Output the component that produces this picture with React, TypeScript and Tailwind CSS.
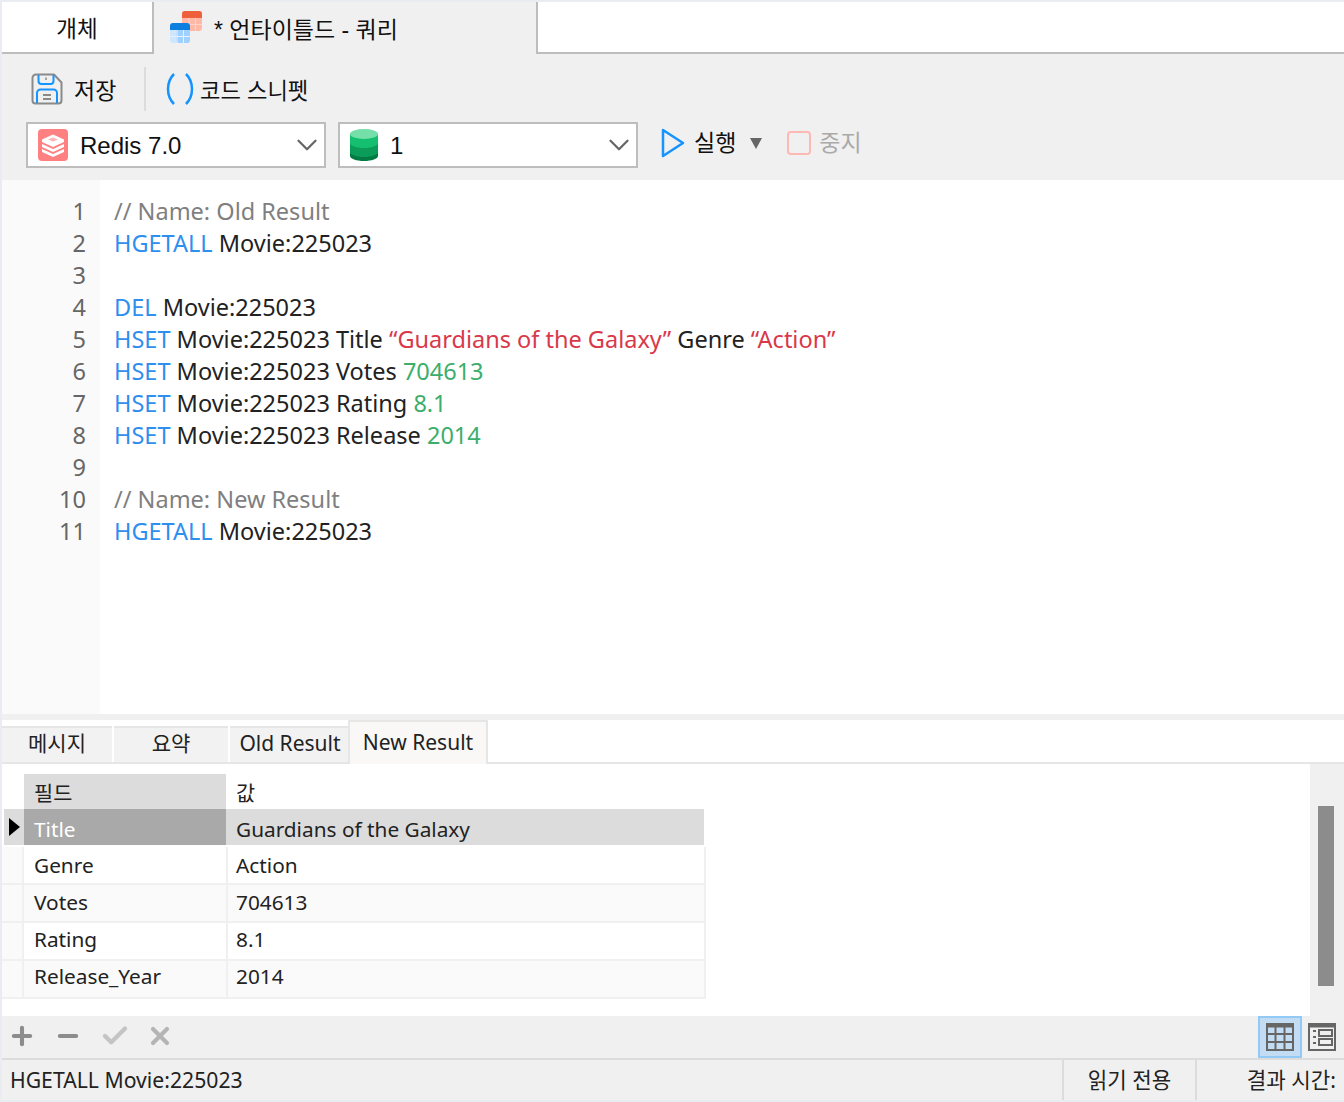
import { Check, ChevronDown, Minus, Plus, X } from "lucide-react";

const kr = "font-['Noto_Sans','Noto_Sans_CJK_KR',sans-serif]";
const ui = "font-['Liberation_Sans','Noto_Sans_CJK_KR',sans-serif]";

type Part = { t: string; c?: string };

const KEY = "text-[#2f8fee]";
const STR = "text-[#d8394a]";
const NUM = "text-[#3cae6b]";
const COM = "text-[#7f7f7f]";

const lines: Part[][] = [
	[{ t: "// Name: Old Result", c: COM }],
	[{ t: "HGETALL", c: KEY }, { t: " Movie:225023" }],
	[],
	[{ t: "DEL", c: KEY }, { t: " Movie:225023" }],
	[
		{ t: "HSET", c: KEY },
		{ t: " Movie:225023 Title " },
		{ t: "“Guardians of the Galaxy”", c: STR },
		{ t: " Genre " },
		{ t: "“Action”", c: STR },
	],
	[{ t: "HSET", c: KEY }, { t: " Movie:225023 Votes " }, { t: "704613", c: NUM }],
	[{ t: "HSET", c: KEY }, { t: " Movie:225023 Rating " }, { t: "8.1", c: NUM }],
	[{ t: "HSET", c: KEY }, { t: " Movie:225023 Release " }, { t: "2014", c: NUM }],
	[],
	[{ t: "// Name: New Result", c: COM }],
	[{ t: "HGETALL", c: KEY }, { t: " Movie:225023" }],
];

// text sits a little higher in each lower row of the reference
const rows = [
	{ name: "Genre", value: "Action", pad: "pt-[2px]" },
	{ name: "Votes", value: "704613", pad: "pb-0" },
	{ name: "Rating", value: "8.1", pad: "pb-[2px]" },
	{ name: "Release_Year", value: "2014", pad: "pb-[4px]" },
];

const QueryIcon = () => (
	<svg width="34" height="34" viewBox="0 0 34 34">
		<rect x="13" y="0" width="20" height="20" rx="3" fill="#ffb9a6" />
		<path d="M13 7V3a3 3 0 0 1 3-3h14a3 3 0 0 1 3 3v4z" fill="#ee5f3c" />
		<path d="M20 7v13M26.500 7v13M13 13.500h20" stroke="#ffd2c6" strokeWidth="1" />
		<rect x="1" y="12" width="20" height="20" rx="3" fill="#cfe6ff" />
		<rect x="7" y="18" width="14" height="14" rx="3" fill="#9fd0ff" />
		<path d="M1 19v-4a3 3 0 0 1 3-3h14a3 3 0 0 1 3 3v4z" fill="#0a7fe0" />
		<path d="M8 19v13M14.500 19v13M1 25.500h20" stroke="#e4f1ff" strokeWidth="1" />
	</svg>
);

const SaveIcon = () => (
	<svg width="32" height="32" viewBox="0 0 32 32" fill="none">
		<path d="M5 1.500h18l7.500 8v18a3 3 0 0 1-3 3H4.500a3 3 0 0 1-3-3V5a3.500 3.500 0 0 1 3.500-3.500z" stroke="#8a8a8a" strokeWidth="2" strokeLinejoin="round" />
		<path d="M7.500 2v6a3 3 0 0 0 3 3h9a3 3 0 0 0 3-3V2" stroke="#1593ff" strokeWidth="2" />
		<path d="M6 30V20a3.500 3.500 0 0 1 3.500-3.500h13a3.500 3.500 0 0 1 3.500 3.500v10" stroke="#1593ff" strokeWidth="2" />
		<path d="M12 22h8M12 26h8" stroke="#8a8a8a" strokeWidth="2" />
		<path d="M15 4.500v2.500" stroke="#8a8a8a" strokeWidth="1.500" />
	</svg>
);

const RedisIcon = () => (
	<svg width="30" height="32" viewBox="0 0 30 32">
		<rect width="30" height="32" rx="4" fill="#ff8080" />
		<path d="M4 20l11 5 11-5v3l-11 5-11-5z" fill="#fff" />
		<path d="M4 15l11 5 11-5v3l-11 5-11-5z" fill="#fff" />
		<path d="M4 10.500l11-5 11 5v2.500l-11 5-11-5z" fill="#fff" />
		<path d="M10 10.500l5-2 5 2-5 2z" fill="#ffb3b3" />
	</svg>
);

const DbIcon = () => (
	<svg width="28" height="32" viewBox="0 0 28 32">
		<path d="M0 23v4c0 2.800 6.300 5 14 5s14-2.200 14-5v-4z" fill="#017a43" />
		<path d="M0 13v10c0 2.800 6.300 5 14 5s14-2.200 14-5V13z" fill="#0a9c58" />
		<path d="M0 5v9c0 2.800 6.300 5 14 5s14-2.200 14-5V5z" fill="#14bf6f" />
		<ellipse cx="14" cy="5" rx="14" ry="5" fill="#74dfa9" />
	</svg>
);

const Select = ({ icon, label }: { icon: React.ReactNode; label: string }) => (
	<div className="flex items-center w-[300px] h-[46px] bg-white border-2 border-[#bdbdbd] pl-[10px] pr-0">
		{icon}
		<span className={`ml-[12px] pt-[2px] text-[24px] text-[#111] flex-1 ${ui}`}>{label}</span>
		<ChevronDown size={34} strokeWidth={1.6} className="text-[#666]" />
	</div>
);

export default function App() {
	return (
		<div className={`w-[1344px] h-[1102px] bg-[#e9edf1] pl-[2px] pt-[2px] pb-[2px] overflow-hidden ${kr}`}>
			<div className="h-full flex flex-col bg-[#f0f0f0]">
				{/* document tabs */}
				<div className={`h-[52px] flex shrink-0 ${ui}`}>
					<div className="w-[152px] bg-white border-b-2 border-r-2 border-[#bdbdbd] flex items-center justify-center pt-[6px] text-[22.5px] text-[#111]">
						개체
					</div>
					<div className="w-[384px] border-r-2 border-[#bdbdbd] flex items-center pl-[15px] text-[23px] text-[#111]">
						<QueryIcon />
						<span className="ml-[11px] pt-[4px]">* 언타이틀드 - 쿼리</span>
					</div>
					<div className="flex-1 bg-white border-b-2 border-[#bdbdbd]" />
				</div>

				{/* toolbar */}
				<div className={`h-[126px] shrink-0 pl-[24px] ${ui}`}>
					<div className="h-[68px] flex items-center pt-[2px]">
						<div className="flex items-center w-[118px] pl-[5px]">
							<SaveIcon />
							<span className="ml-[11px] pt-[5px] text-[23px] text-[#111]">저장</span>
						</div>
						<div className="w-[2px] h-[44px] bg-[#dcdcdc]" />
						<svg width="30" height="32" viewBox="0 0 30 32" fill="none" className="ml-[19px]">
							<path d="M9 1C1 9 1 23 9 31M21 1c8 8 8 22 0 30" stroke="#1593ff" strokeWidth="2.500" />
						</svg>
						<span className="ml-[5px] pt-[6px] text-[22.2px] text-[#111]">코드 스니펫</span>
					</div>
					<div className="flex items-center gap-[12px]">
						<Select icon={<RedisIcon />} label="Redis 7.0" />
						<Select icon={<DbIcon />} label="1" />
						<div className="flex items-center ml-[11px] -mt-[4px]">
							<svg width="24" height="30" viewBox="0 0 24 30" fill="none">
								<path d="M2 2l20 13L2 28z" stroke="#1593ff" strokeWidth="2.500" strokeLinejoin="round" />
							</svg>
							<span className="ml-[9px] text-[23px] text-[#111]">실행</span>
							<span className="ml-[14px] w-0 h-0 border-l-[6px] border-r-[6px] border-t-[11px] border-l-transparent border-r-transparent border-t-[#666]" />
							<span className="ml-[25px] w-[24px] h-[24px] rounded-[4px] border-2 border-[#ffb8b4]" />
							<span className="ml-[8px] text-[23px] text-[#aaa]">중지</span>
						</div>
					</div>
				</div>

				{/* editor */}
				<div className="h-[534px] shrink-0 bg-white flex text-[23.5px] leading-[32px] text-[#222]">
					<div className="w-[98px] pt-[15px] bg-[#fafafa] text-[#666] text-right pr-[14px]">
						{lines.map((_, i) => (
							<div key={i} className="h-[32px]">{i + 1}</div>
						))}
					</div>
					<div className="pl-[14px] pt-[15px]">
						{lines.map((parts, i) => (
							<div key={i} className="h-[32px] whitespace-pre">
								{parts.map((p, j) => (
									<span key={j} className={p.c}>{p.t}</span>
								))}
							</div>
						))}
					</div>
				</div>

				<div className="h-[6px] shrink-0 bg-[#f0f0f0]" />

				{/* result tabs */}
				<div className="h-[44px] shrink-0 bg-white flex items-end text-[21px] text-[#222] border-b-2 border-[#e6e6e6]">
					<div className="w-[110px] h-[36px] mr-[2px] bg-[#f3f2f3] border-t-2 border-[#e6e6e6] flex items-center justify-center pb-[2px]">메시지</div>
					<div className="w-[114px] h-[36px] mr-[2px] bg-[#f3f2f3] border-t-2 border-[#e6e6e6] flex items-center justify-center pb-[2px]">요약</div>
					<div className="w-[118px] h-[36px] bg-[#f3f2f3] border-t-2 border-[#e6e6e6] flex items-center justify-center pb-[2px] pl-[2px]">Old Result</div>
					<div className="w-[140px] h-[44px] -mb-[2px] bg-[#f9f8f7] border-t-2 border-x-2 border-[#e6e6e6] flex items-center justify-center">New Result</div>
				</div>

				{/* grid */}
				<div className="h-[252px] shrink-0 bg-white flex text-[20.8px] text-[#222]">
					<div className="flex-1 flex flex-col pt-[10px]">
						<div className="flex h-[35px]">
							<div className="w-[22px] bg-white" />
							<div className="w-[202px] bg-[#dcdcdc] pl-[10px] pt-[4px] flex items-center">필드</div>
							<div className="w-[478px] pl-[10px] pt-[4px] flex items-center">값</div>
						</div>
						<div className="flex h-[36px] pl-[2px]">
							<div className="w-[20px] bg-[#dcdcdc] flex items-center pl-[5px]">
								<span className="w-0 h-0 border-y-[9px] border-l-[11px] border-y-transparent border-l-black" />
							</div>
							<div className="w-[202px] bg-[#a9a9a9] text-white pl-[10px] pt-[6px] flex items-center">Title</div>
							<div className="w-[478px] bg-[#dcdcdc] pl-[10px] pt-[6px] flex items-center">Guardians of the Galaxy</div>
						</div>
						{rows.map((r, i) => (
							<div key={r.name} className={`flex h-[38px] w-[704px] border-b-2 border-[#f0f0f0] ${i === 0 ? "mt-[2px]" : ""} ${i % 2 ? "bg-[#fafafa]" : "bg-white"}`}>
								<div className="w-[22px] border-r-2 border-[#f0f0f0] bg-[#fafafa]" />
								<div className={`w-[204px] pl-[10px] flex items-center border-r-2 border-[#f0f0f0] ${r.pad}`}>{r.name}</div>
								<div className={`flex-1 pl-[8px] flex items-center border-r-2 border-[#f0f0f0] ${r.pad}`}>{r.value}</div>
							</div>
						))}
					</div>
					<div className="w-[34px] bg-[#f0f0f0] pt-[42px] pl-[8px]">
						<div className="w-[16px] h-[180px] bg-[#8c8c8c]" />
					</div>
				</div>

				{/* grid toolbar */}
				<div className="h-[42px] shrink-0 flex items-center pl-[6px] pr-[8px]">
					<Plus size={28} strokeWidth={3.5} className="text-[#8c8c8c] -mt-[2px]" />
					<Minus size={28} strokeWidth={3.5} className="text-[#8c8c8c] ml-[18px] -mt-[2px]" />
					<Check size={30} strokeWidth={3.5} className="text-[#c4c4c4] ml-[18px] -mt-[2px]" />
					<X size={28} strokeWidth={3.5} className="text-[#b4b4b4] ml-[16px] -mt-[2px]" />
					<div className="ml-auto w-[44px] h-[42px] bg-[#c2dcf4] border-2 border-[#92c9f5] flex items-center justify-center">
						<svg width="28" height="28" viewBox="0 0 28 28" fill="none" stroke="#666" strokeWidth="2">
							<rect x="1" y="1" width="26" height="26" />
							<path d="M1 3h26" strokeWidth="3" />
							<path d="M1 11h26M1 19h26M9.500 3v24M18.500 3v24" />
						</svg>
					</div>
					<div className="w-[34px] flex justify-end">
						<svg width="28" height="28" viewBox="0 0 28 28" fill="none" stroke="#666" strokeWidth="2">
							<rect x="1" y="1" width="26" height="26" />
							<path d="M1 3h26" strokeWidth="3" />
							<path d="M5 8h3M5 14h3M5 20h3" />
							<rect x="11" y="7" width="13" height="6" />
							<rect x="11" y="16" width="13" height="6" />
						</svg>
					</div>
				</div>

				{/* status bar */}
				<div className="flex-1 flex border-t-2 border-[#dcdcdc] text-[21.2px] text-[#222]">
					<div className="w-[1060px] pl-[8px] flex items-center">HGETALL Movie:225023</div>
					<div className="w-[133px] border-l-2 border-[#dcdcdc] flex items-center justify-center">읽기 전용</div>
					<div className="flex-1 border-l-2 border-[#dcdcdc] flex items-center justify-end pr-[8px]">결과 시간:</div>
				</div>
			</div>
		</div>
	);
}
